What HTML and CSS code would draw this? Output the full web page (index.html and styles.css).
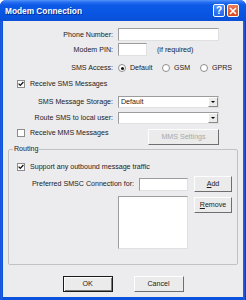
FILE: index.html
```html
<!DOCTYPE html>
<html>
<head>
<meta charset="utf-8">
<link rel="stylesheet" href="styles.css">
</head>
<body>
<div class="window">
  <div class="titlebar">
    <span class="title">Modem Connection</span>
    <div class="tb-buttons">
      <span class="tb-btn help">?</span>
      <span class="tb-btn close"><svg width="8" height="8" viewBox="0 0 8 8"><path d="M1 1L7 7M7 1L1 7" stroke="#fff" stroke-width="1.6" fill="none"/></svg></span>
    </div>
  </div>
  <div class="client">
    <div class="row r-phone">
      <span class="lbl">Phone Number:</span>
      <div class="edit edit-phone"></div>
    </div>
    <div class="row r-pin">
      <span class="lbl">Modem PIN:</span>
      <div class="pin-cell">
        <div class="edit edit-pin"></div>
        <span>(if required)</span>
      </div>
    </div>
    <div class="row r-access">
      <span class="lbl">SMS Access:</span>
      <div class="radios">
        <span class="opt"><span class="radio on"></span>Default</span>
        <span class="opt"><span class="radio"></span>GSM</span>
        <span class="opt"><span class="radio"></span>GPRS</span>
      </div>
    </div>
    <div class="check-row r-recv">
      <span class="cb"><svg width="6" height="6" viewBox="0 0 6 6"><path d="M0.6 2.6L2.3 4.4L5.4 1" stroke="#111" stroke-width="1.3" fill="none"/></svg></span>
      <span>Receive SMS Messages</span>
    </div>
    <div class="row r-storage">
      <span class="lbl">SMS Message Storage:</span>
      <div class="select"><span>Default</span><span class="dd"></span></div>
    </div>
    <div class="row r-route">
      <span class="lbl">Route SMS to local user:</span>
      <div class="select"><span></span><span class="dd"></span></div>
    </div>
    <div class="mms-row">
      <div class="check-inline">
        <span class="cb"></span>
        <span>Receive MMS Messages</span>
      </div>
      <div class="btn btn-mms disabled">MMS Settings</div>
    </div>
    <fieldset class="group">
      <legend>Routing</legend>
      <div class="check-row r-support">
        <span class="cb"><svg width="6" height="6" viewBox="0 0 6 6"><path d="M0.6 2.6L2.3 4.4L5.4 1" stroke="#111" stroke-width="1.3" fill="none"/></svg></span>
        <span>Support any outbound message traffic</span>
      </div>
      <div class="pref-row">
        <span class="pref-lbl">Preferred SMSC Connection for:</span>
        <div class="edit edit-pref"></div>
        <div class="btn btn-side"><u>A</u>dd</div>
      </div>
      <div class="list-row">
        <div class="listbox"></div>
        <div class="btn btn-side btn-remove"><u>R</u>emove</div>
      </div>
    </fieldset>
    <div class="buttons">
      <div class="btn btn-main default">OK</div>
      <div class="btn btn-main">Cancel</div>
    </div>
  </div>
</div>
</body>
</html>
```
FILE: styles.css
```css
* { box-sizing: border-box; }
html, body { margin: 0; padding: 0; background: #fff; }
body {
  font-family: "Liberation Sans", Arial, sans-serif;
  font-size: 7.1px;
  line-height: 8px;
  color: #1c1c1c;
}
.window {
  width: 246px;
  height: 300px;
  display: flex;
  flex-direction: column;
  background: linear-gradient(to right, #0a3cc8 0, #2a6ff0 1px, #0b52dc 2px, #0b52dc 243px, #2a6ff0 244px, #0a3cc8 245px);
  border-radius: 6px 6px 0 0;
  overflow: hidden;
}
.titlebar {
  height: 21px;
  flex: none;
  display: flex;
  align-items: center;
  justify-content: space-between;
  padding: 0 7px 0 5px;
  background: linear-gradient(#5596fa 0, #2a72f2 2px, #0e5ae6 5px, #0856e3 60%, #0a50d8 100%);
}
.title {
  color: #fff;
  font-weight: bold;
  font-size: 8.3px;
  text-shadow: 1px 1px 0 #0a2a8a;
}
.tb-buttons { display: flex; gap: 2px; }
.tb-btn {
  width: 12px;
  height: 13px;
  border: 1px solid #fff;
  border-radius: 2px;
  display: flex;
  align-items: center;
  justify-content: center;
  color: #fff;
  font-weight: bold;
  font-size: 10px;
}
.help { background: linear-gradient(#4e8ff8, #2365ea); }
.close { background: linear-gradient(#ec7a55, #d8461c); }
.client {
  flex: 1;
  margin: 0 3px 3px;
  background: #ecebee;
  display: flex;
  flex-direction: column;
}
.row {
  display: grid;
  grid-template-columns: 110px auto;
  column-gap: 5px;
  align-items: center;
}
.lbl { text-align: right; }
.r-phone { margin-top: 7px; }
.r-pin { margin-top: 2px; }
.r-access { margin-top: 6px; height: 12px; }
.edit {
  height: 13px;
  background: #fff;
  border: 1px solid;
  border-color: #9c9c9c #e0e0e0 #e0e0e0 #9c9c9c;
}
.edit-phone { width: 101px; }
.edit-pin { width: 29px; }
.pin-cell { display: flex; align-items: center; gap: 10px; }
.radios { display: grid; grid-template-columns: 44px 38px auto; }
.opt { display: flex; align-items: center; gap: 4px; }
.radio {
  width: 8px;
  height: 8px;
  border-radius: 50%;
  background: #fff;
  border: 1px solid #8f8f8f;
  display: flex;
  align-items: center;
  justify-content: center;
}
.radio.on::after {
  content: "";
  width: 3px;
  height: 3px;
  border-radius: 50%;
  background: #111;
}
.check-row {
  display: flex;
  align-items: center;
  gap: 5px;
  height: 8px;
}
.r-recv { margin-top: 6px; padding-left: 14px; }
.cb {
  width: 8px;
  height: 8px;
  flex: none;
  background: #fff;
  border: 1px solid #8c8c8c;
  display: flex;
  align-items: center;
  justify-content: center;
}
.r-storage { margin-top: 8px; }
.r-route { margin-top: 4px; }
.select {
  width: 101px;
  height: 12px;
  background: #fff;
  border: 1px solid;
  border-color: #9c9c9c #e0e0e0 #e0e0e0 #9c9c9c;
  display: flex;
  align-items: center;
  justify-content: space-between;
  padding-left: 2px;
}
.dd {
  width: 10px;
  height: 10px;
  background: #ebebeb;
  border: 1px solid;
  border-color: #fff #8a8a8a #8a8a8a #fff;
  display: flex;
  align-items: center;
  justify-content: center;
}
.dd::after {
  content: "";
  border-left: 2.5px solid transparent;
  border-right: 2.5px solid transparent;
  border-top: 2.5px solid #000;
}
.mms-row {
  display: flex;
  align-items: flex-start;
  margin-top: 5px;
  padding-left: 14px;
}
.check-inline { display: flex; align-items: center; gap: 5px; height: 8px; }
.btn {
  display: flex;
  align-items: center;
  justify-content: center;
  background: #ebebeb;
  border: 1px solid;
  border-color: #fdfdfd #6e6e6e #6e6e6e #fdfdfd;
  height: 16px;
}
.btn u { text-decoration: underline; }
.btn-mms { margin-left: auto; margin-right: 24px; width: 71px; }
.disabled { color: #a8a8a8; }
.group {
  margin: 0 5px;
  padding: 0 0 15px 0;
  border: 1px solid #c2c2c2;
  border-radius: 2px;
  min-width: 0;
}
.group legend {
  margin-left: 4px;
  padding: 0 1px;
  line-height: 8px;
}
.r-support { margin-top: 10px; padding-left: 8px; }
.pref-row {
  display: flex;
  justify-content: flex-end;
  align-items: center;
  padding-right: 5px;
  margin-top: 5px;
}
.pref-lbl { margin-right: 5px; }
.edit-pref { width: 49px; }
.btn-side { width: 38px; margin-left: 6px; }
.list-row {
  display: flex;
  justify-content: flex-end;
  align-items: flex-start;
  padding-right: 5px;
  margin-top: 4px;
}
.listbox {
  width: 70px;
  height: 53px;
  background: #fff;
  border: 1px solid;
  border-color: #9c9c9c #e0e0e0 #e0e0e0 #9c9c9c;
}
.btn-remove { margin-top: 1px; }
.buttons {
  display: flex;
  justify-content: center;
  gap: 21px;
  margin-top: 11px;
}
.btn-main { width: 50px; }
.btn.default {
  border-color: #1a1a1a;
  box-shadow: inset 1px 1px 0 #fdfdfd, inset -1px -1px 0 #7a7a7a;
}
```
